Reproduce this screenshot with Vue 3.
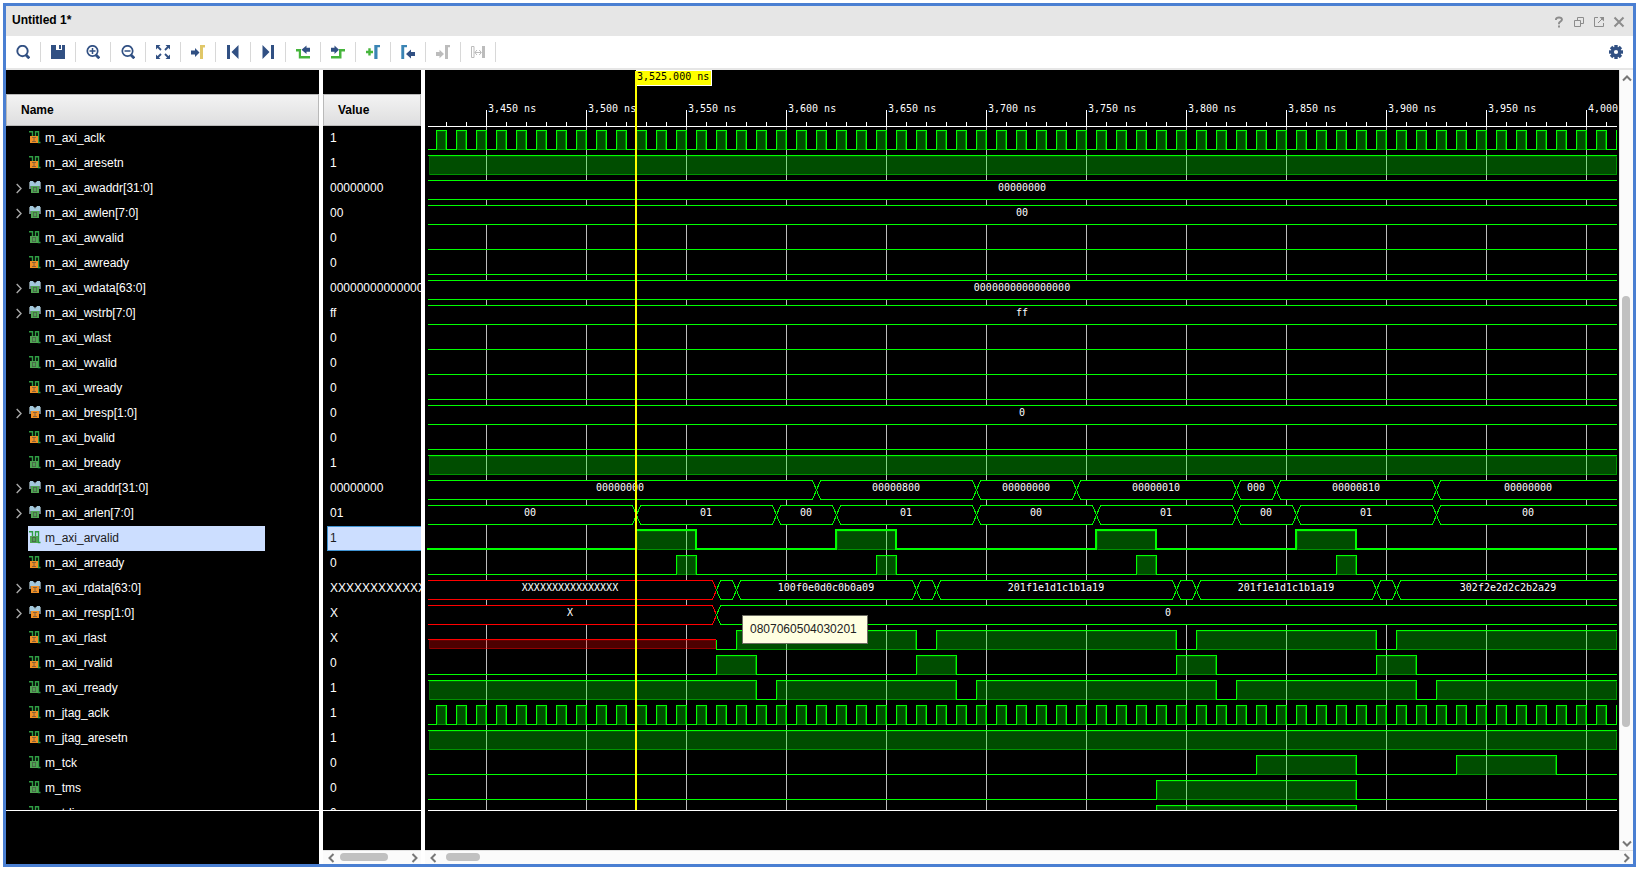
<script setup>
import { ref, computed, onMounted, onBeforeUnmount } from 'vue'

const tools = [
  { id: 'search', label: 'Find' },
  { id: 'save', label: 'Save waveform configuration' },
  { id: 'zoomin', label: 'Zoom in' },
  { id: 'zoomout', label: 'Zoom out' },
  { id: 'fit', label: 'Zoom fit' },
  { id: 'cursor', label: 'Go to cursor' },
  { id: 'first', label: 'Go to start' },
  { id: 'last', label: 'Go to end' },
  { id: 'prev', label: 'Previous transition' },
  { id: 'next', label: 'Next transition' },
  { id: 'add', label: 'Add marker' },
  { id: 'pmark', label: 'Previous marker' },
  { id: 'nmark', label: 'Next marker', disabled: true },
  { id: 'swap', label: 'Swap cursors', disabled: true }
]

const clock = { start: 0, edges: Array.from({ length: 122 }, (_, i) => 3415 + i * 5) }
const high = { start: 1, edges: [] }
const low = { start: 0, edges: [] }
const bus = (...values) => ({ values })

const signals = [
  { name: 'm_axi_aclk', dir: 'in', value: '1', wave: clock },
  { name: 'm_axi_aresetn', dir: 'in', value: '1', wave: high },
  { name: 'm_axi_awaddr[31:0]', dir: 'out', value: '00000000', wave: bus([0, '00000000']) },
  { name: 'm_axi_awlen[7:0]', dir: 'out', value: '00', wave: bus([0, '00']) },
  { name: 'm_axi_awvalid', dir: 'out', value: '0', wave: low },
  { name: 'm_axi_awready', dir: 'in', value: '0', wave: low },
  { name: 'm_axi_wdata[63:0]', dir: 'out', value: '0000000000000000', wave: bus([0, '0000000000000000']) },
  { name: 'm_axi_wstrb[7:0]', dir: 'out', value: 'ff', wave: bus([0, 'ff']) },
  { name: 'm_axi_wlast', dir: 'out', value: '0', wave: low },
  { name: 'm_axi_wvalid', dir: 'out', value: '0', wave: low },
  { name: 'm_axi_wready', dir: 'in', value: '0', wave: low },
  { name: 'm_axi_bresp[1:0]', dir: 'in', value: '0', wave: bus([0, '0']) },
  { name: 'm_axi_bvalid', dir: 'in', value: '0', wave: low },
  { name: 'm_axi_bready', dir: 'out', value: '1', wave: high },
  {
    name: 'm_axi_araddr[31:0]', dir: 'out', value: '00000000',
    wave: bus([0, '00000000'], [3615, '00000800'], [3695, '00000000'], [3745, '00000010'], [3825, '000'], [3845, '00000810'], [3925, '00000000'])
  },
  {
    name: 'm_axi_arlen[7:0]', dir: 'out', value: '01',
    wave: bus([0, '00'], [3525, '01'], [3595, '00'], [3625, '01'], [3695, '00'], [3755, '01'], [3825, '00'], [3855, '01'], [3925, '00'])
  },
  { name: 'm_axi_arvalid', dir: 'out', value: '1', selected: true, wave: { start: 0, edges: [3525, 3555, 3625, 3655, 3755, 3785, 3855, 3885] } },
  { name: 'm_axi_arready', dir: 'in', value: '0', wave: { start: 0, edges: [3545, 3555, 3645, 3655, 3775, 3785, 3875, 3885] } },
  {
    name: 'm_axi_rdata[63:0]', dir: 'in', value: 'XXXXXXXXXXXXXXXX',
    wave: bus([0, 'XXXXXXXXXXXXXXXX'], [3565, ''], [3575, '100f0e0d0c0b0a09'], [3665, ''], [3675, '201f1e1d1c1b1a19'], [3795, ''], [3805, '201f1e1d1c1b1a19'], [3895, ''], [3905, '302f2e2d2c2b2a29'])
  },
  { name: 'm_axi_rresp[1:0]', dir: 'in', value: 'X', wave: bus([0, 'X'], [3565, '0']) },
  { name: 'm_axi_rlast', dir: 'in', value: 'X', wave: { unknown: 3565, start: 0, edges: [3575, 3665, 3675, 3795, 3805, 3895, 3905] } },
  { name: 'm_axi_rvalid', dir: 'in', value: '0', wave: { start: 0, edges: [3565, 3585, 3665, 3685, 3795, 3815, 3895, 3915] } },
  { name: 'm_axi_rready', dir: 'out', value: '1', wave: { start: 1, edges: [3585, 3595, 3685, 3695, 3815, 3825, 3915, 3925] } },
  { name: 'm_jtag_aclk', dir: 'in', value: '1', wave: clock },
  { name: 'm_jtag_aresetn', dir: 'in', value: '1', wave: high },
  { name: 'm_tck', dir: 'out', value: '0', wave: { start: 0, edges: [3835, 3885, 3935, 3985] } },
  { name: 'm_tms', dir: 'out', value: '0', wave: { start: 0, edges: [3785, 3885] } },
  { name: 'm_tdi', dir: 'out', value: '0', wave: { start: 0, edges: [3785, 3885] } }
]

const plot = ref(null)
const width = ref(1194)
let observer
onMounted(() => {
  const measure = () => { width.value = Math.round(plot.value.clientWidth) }
  measure()
  observer = new ResizeObserver(measure)
  observer.observe(plot.value)
})
onBeforeUnmount(() => observer.disconnect())

const ROW = 25
const RULER = 56
const START = 3
const end = computed(() => width.value - 2)
const xOf = t => 61 + 2 * (t - 3450)
const cursorX = xOf(3525)

const ticks = computed(() => {
  const list = []
  for (let t = 3430; xOf(t) < end.value; t += 10) list.push({ x: xOf(t), major: t % 50 === 0, t })
  return list
})
const majors = computed(() => ticks.value.filter(k => k.major))
const stamp = t => `${String(t)[0]},${String(t).slice(1)} ns`

function drawLogic(s, y) {
  const o = s.selected ? 0 : 0.5
  const yh = y + 4 + o
  const yl = y + 23 + o
  const first = s.wave.unknown ? xOf(s.wave.unknown) : s.selected ? START - 1 : START
  let level = s.wave.start
  let from = first
  let d = s.wave.unknown ? `M${first + 0.5} ${y + 14}V${yl}` : `M${first} ${level ? yh : yl}`
  const fills = []
  const fill = (a, b) => { if (b - a > 3) fills.push({ x: a + 1.5, w: b - a - 2, y: y + 5.5, h: 18 }) }
  for (const t of s.wave.edges) {
    const x = xOf(t)
    if (x <= START || x >= end.value) continue
    if (level) fill(from, x)
    level = level ? 0 : 1
    from = x
    d += `H${x + o}V${level ? yh : yl}`
  }
  if (level) fill(from, end.value)
  d += `H${end.value}`
  return {
    lines: [{ d, red: false }],
    fills,
    unknown: s.wave.unknown ? { x: START + 1.5, y: y + 14.5, w: first - START - 2, h: 8, line: `M${START} ${y + 13.5}H${first}` } : null,
    blocks: [], texts: []
  }
}

function drawBus(s, y) {
  const t0 = y + 4.5
  const mid = y + 14
  const b0 = y + 23.5
  const lines = []
  const texts = []
  s.wave.values.forEach(([t, text], i, all) => {
    const isFirst = i === 0
    const isLast = i === all.length - 1
    const a = isFirst ? START : xOf(t) + 0.5
    const b = isLast ? end.value : xOf(all[i + 1][0]) + 0.5
    const al = isFirst ? a : a + 4
    const br = isLast ? b : b - 4
    let d = ''
    if (isFirst) d += `M${al} ${t0}`
    else d += `M${a} ${mid}L${al} ${t0}`
    d += `H${br}`
    if (!isLast) d += `L${b} ${mid}L${br} ${b0}`
    else d += `M${br} ${b0}`
    d += `H${al}`
    if (!isFirst) d += `L${a} ${mid}`
    lines.push({ d, red: text.startsWith('X') })
    const ca = isFirst ? -1 : xOf(t)
    const cb = isLast ? width.value : xOf(all[i + 1][0])
    if (text) texts.push({ x: Math.round((ca + cb) / 2), y: y + 15, text })
  })
  return { lines, texts, fills: [], unknown: null, blocks: [{ y: y + 4, h: 20 }] }
}

const drawn = computed(() => signals.map((s, i) => {
  const y = RULER + i * ROW
  return { id: s.name, selected: s.selected, ...(s.wave.values ? drawBus(s, y) : drawLogic(s, y)) }
}))

const isBus = s => !!s.wave.values
const vThumb = { top: '28%', height: '57.5%' }
const valueThumb = { left: '2%', width: '70%' }
const waveThumb = { left: '0.4%', width: '2.9%' }
</script>

<template>
  <main class="viewer">
    <header class="titlebar">
      <h1>Untitled 1*</h1>
      <div class="window-buttons">
        <button aria-label="Help"><svg width="12" height="12" viewBox="0 0 12 12"><path d="M3 4V3.2Q3.2 1.5 6 1.5T9 3.6Q9 4.8 7.4 5.6T6 7.6V8.2M6 9.4V11.4" stroke-width="1.9" /></svg></button>
        <button aria-label="Restore"><svg width="12" height="12" viewBox="0 0 12 12"><path d="M4.5 4.5V1.5H10.5V7.5H7.5M1.5 4.5H7.5V10.5H1.5Z" /></svg></button>
        <button aria-label="Float"><svg width="12" height="12" viewBox="0 0 12 12"><path d="M5 1.5H1.5V10.5H10.5V7M5 7L9 3" /><path d="M6.5 1H11V5.5Z" class="solid" /></svg></button>
        <button aria-label="Close"><svg width="12" height="12" viewBox="0 0 12 12"><path d="M1.5 1.5L10.5 10.5M10.5 1.5L1.5 10.5" stroke-width="2" /></svg></button>
      </div>
    </header>

    <nav class="toolbar" aria-label="Waveform tools">
      <button v-for="t in tools" :key="t.id" class="tool" :aria-label="t.label" :disabled="t.disabled">
        <svg width="14" height="14" viewBox="0 0 14 14">
          <g v-if="t.id === 'search'" class="ln"><circle cx="6.5" cy="6" r="5.2" stroke-width="1.9" /><path d="M10 10L13.3 13.3" stroke-width="2.8" /></g>
          <g v-else-if="t.id === 'save'" class="navy"><path d="M0 0H5V5H11V0H14V14H0Z" /><path d="M8 0H10V4H8Z" /></g>
          <g v-else-if="t.id === 'zoomin'" class="ln"><circle cx="6.5" cy="6" r="5.2" stroke-width="1.7" /><path d="M10 10L13.3 13.3" stroke-width="2.8" /><path d="M3.5 6H9.5M6.5 3V9" stroke-width="1.5" /></g>
          <g v-else-if="t.id === 'zoomout'" class="ln"><circle cx="6.5" cy="6" r="5.2" stroke-width="1.7" /><path d="M10 10L13.3 13.3" stroke-width="2.8" /><path d="M3.5 6H9.5" stroke-width="1.5" /></g>
          <g v-else-if="t.id === 'fit'"><path class="navy" d="M0 0H4.5L0 4.5ZM14 0V4.5L9.5 0ZM0 14V9.5L4.5 14ZM14 14H9.5L14 9.5Z" /><path class="ln" d="M1 1L5 5M13 1L9 5M1 13L5 9M13 13L9 9" stroke-width="1.8" /></g>
          <g v-else-if="t.id === 'cursor'"><path class="navy" d="M0 5.5H4V3L8.5 7.5L4 12V9.5H0Z" /><path class="gold" d="M9 14V0H14V2.5H12V14Z" /></g>
          <g v-else-if="t.id === 'first'" class="navy"><path d="M1 0H4V14H1ZM12.5 0V14L5.5 7Z" /></g>
          <g v-else-if="t.id === 'last'" class="navy"><path d="M10 0H13V14H10ZM1.5 0V14L8.5 7Z" /></g>
          <g v-else-if="t.id === 'prev'"><path class="green" d="M0 4H5V11H14V13.5H2.8V6.5H0Z" /><path class="navy" d="M14 2.7H10.5V0.5L5.5 4.8L10.5 9V6.8H14Z" /></g>
          <g v-else-if="t.id === 'next'"><path class="green" d="M14 4H8V11H0V13.5H10.5V6.5H14Z" /><path class="navy" d="M0 2.7H3.5V0.5L8 4.8L3.5 9V6.8H0Z" /></g>
          <g v-else-if="t.id === 'add'"><path class="green" d="M0 5.8H2.3V3.3H4.7V5.8H7V8.2H4.7V10.6H2.3V8.2H0Z" /><path class="teal" d="M8.3 14V0H14V2.2H11.5V14Z" /></g>
          <g v-else-if="t.id === 'pmark'"><path class="teal" d="M0.3 14V0H6V2.2H3.2V14Z" /><path class="navy" d="M14 7H10V4.6L5 9L10 13.4V11H14Z" /></g>
          <g v-else-if="t.id === 'nmark'" class="gray"><path d="M0 7H3.5V4.8L8 9L3.5 13.2V11H0Z" /><path d="M9 14V0H14V2.2H12V14Z" /></g>
          <g v-else><path class="gray" d="M11 1H14V13H11Z" /><path class="lg" d="M0.5 1.5H3V12.5H0.5ZM4 7.5H10M6 5L3.8 7.5L6 10M8.2 5L10.4 7.5L8.2 10" /></g>
        </svg>
      </button>
      <button class="settings" aria-label="Settings">
        <svg width="14" height="14" viewBox="-7 -7 14 14">
          <g class="navy"><rect v-for="a in 4" :key="a" x="-1.7" y="-7" width="3.4" height="14" :transform="`rotate(${a * 45})`" /><circle r="5.2" /></g>
          <circle r="2.1" fill="#fff" />
        </svg>
      </button>
    </nav>

    <div class="body">
      <section class="column names" aria-label="Name">
        <div class="pane">
          <div class="head"><h2>Name</h2></div>
          <div v-for="s in signals" :key="s.name" class="row">
            <button v-if="isBus(s)" class="expander" :aria-label="'Expand ' + s.name"><svg width="6" height="11" viewBox="0 0 6 11"><path d="M0.7 1L5 5.5L0.7 10" /></svg></button>
            <span v-else class="expander"></span>
            <span class="label" :class="{ selected: s.selected }">
              <svg width="12" height="13" viewBox="0 0 12 13" :class="s.dir">
                <template v-if="isBus(s)">
                  <path fill="#6f7f87" d="M0 1H12V8H0Z" />
                  <path fill="#a3c8dc" d="M1 0H4L6 3L8 0H11V5H1Z" />
                  <path fill="#000" d="M5 0H7L6 2Z" />
                  <rect class="chip" x="2" y="5" width="8" height="7" />
                  <path class="mark" d="M4 6.5H8M4 10.5H8" />
                  <path v-if="s.dir === 'in'" class="mark" d="M6 6.5V10.5" />
                  <path v-else class="mark" d="M4.5 6.5V10.5M7.5 6.5V10.5" />
                </template>
                <template v-else>
                  <path class="pulse" d="M0 0.8H3.5V6M6.5 9V0.8H9.5V11.5H11.5" />
                  <rect class="chip" x="1" y="5" width="8" height="7" />
                  <path class="mark" d="M3 6.5H7M3 10.5H7" />
                  <path v-if="s.dir === 'in'" class="mark" d="M5 6.5V10.5" />
                  <path v-else class="mark" d="M3.5 6.5V10.5M6.5 6.5V10.5" />
                </template>
              </svg>
              {{ s.name }}
            </span>
          </div>
        </div>
        <div class="foot tall"></div>
      </section>

      <section class="column values" aria-label="Value">
        <div class="pane">
          <div class="head"><h2>Value</h2></div>
          <div v-for="s in signals" :key="s.name" class="row value" :class="{ selected: s.selected }">{{ s.value }}</div>
        </div>
        <div class="foot"></div>
        <div class="hbar">
          <button aria-label="Scroll values left"><svg width="7" height="10" viewBox="0 0 7 10"><path d="M5.5 1L1.5 5L5.5 9" /></svg></button>
          <div class="track"><div class="thumb" :style="valueThumb"></div></div>
          <button class="forward" aria-label="Scroll values right"><svg width="7" height="10" viewBox="0 0 7 10"><path d="M1.5 1L5.5 5L1.5 9" /></svg></button>
        </div>
      </section>

      <section class="waves" aria-label="Waveforms">
        <div class="wave-main">
          <div class="column wave-column">
            <div ref="plot" class="pane plot">
              <svg class="canvas" :width="width" height="756">
                <g shape-rendering="crispEdges">
                  <path v-for="k in majors" :key="k.t" class="grid" :d="`M${k.x + 0.5} ${RULER}V756`" />
                  <path v-for="k in ticks" :key="'t' + k.t" class="tick" :d="`M${k.x + 0.5} ${k.major ? 40 : 52}V${RULER}`" />
                  <path class="tick" :d="`M${START} ${RULER + 0.5}H${end}`" />
                  <g v-for="g in drawn" :key="g.id">
                    <rect v-for="b in g.blocks" :key="b.y" :x="START" :y="b.y" :width="end - START" :height="b.h" />
                    <rect v-for="f in g.fills" :key="f.x" class="fill" :x="f.x" :y="f.y" :width="f.w" :height="f.h" />
                    <template v-if="g.unknown">
                      <rect class="fill red" :x="g.unknown.x" :y="g.unknown.y" :width="g.unknown.w" :height="g.unknown.h" />
                      <path class="line red" :d="g.unknown.line" />
                    </template>
                    <path v-for="l in g.lines" :key="l.d" class="line" :class="{ red: l.red, thick: g.selected }" :d="l.d" />
                  </g>
                </g>
                <text v-for="k in majors" :key="'l' + k.t" :x="k.x + 2" y="42">{{ stamp(k.t) }}</text>
                <template v-for="g in drawn" :key="'v' + g.id">
                  <text v-for="t in g.texts" :key="t.x" class="mid" :x="t.x" :y="t.y">{{ t.text }}</text>
                </template>
                <g shape-rendering="crispEdges">
                  <rect :x="cursorX" y="0" width="76" height="16" fill="#fff" />
                  <rect :x="cursorX" y="1" width="75" height="14" fill="#ff0" />
                  <rect :x="cursorX - 1" y="1" width="2" height="755" fill="#ff0" />
                </g>
                <text class="stamp" :x="cursorX + 1" y="10">3,525.000 ns</text>
              </svg>
              <div class="tip" role="tooltip">0807060504030201</div>
            </div>
            <div class="foot inset"></div>
          </div>
          <div class="vbar">
            <button aria-label="Scroll up"><svg width="10" height="7" viewBox="0 0 10 7"><path d="M1 5.5L5 1.5L9 5.5" /></svg></button>
            <div class="track"><div class="thumb" :style="vThumb"></div></div>
            <button class="forward" aria-label="Scroll down"><svg width="10" height="7" viewBox="0 0 10 7"><path d="M1 1.5L5 5.5L9 1.5" /></svg></button>
          </div>
        </div>
        <div class="hbar">
          <button aria-label="Scroll waveform left"><svg width="7" height="10" viewBox="0 0 7 10"><path d="M5.5 1L1.5 5L5.5 9" /></svg></button>
          <div class="track"><div class="thumb" :style="waveThumb"></div></div>
          <button class="forward" aria-label="Scroll waveform right"><svg width="7" height="10" viewBox="0 0 7 10"><path d="M1.5 1L5.5 5L1.5 9" /></svg></button>
        </div>
      </section>
    </div>
  </main>
</template>

<style>
body {
  margin: 0;
  background: #fff;
}
</style>

<style scoped>
.viewer {
  box-sizing: border-box;
  height: calc(100vh - 6px);
  margin: 3px;
  border: 3px solid #4a7fd2;
  display: flex;
  flex-direction: column;
  background: #fff;
  font: 12px "Liberation Sans", Arial, sans-serif;
  color: #000;
}
button {
  padding: 0;
  border: 0;
  background: none;
  display: flex;
  align-items: center;
  justify-content: center;
}
h1, h2 {
  margin: 0;
  font-size: 12px;
  font-weight: bold;
}
.titlebar {
  height: 30px;
  flex: none;
  display: flex;
  align-items: center;
  justify-content: space-between;
  padding: 0 4px 2px 6px;
  box-sizing: border-box;
  background: #e6e6e6;
}
.window-buttons {
  display: flex;
  padding-top: 4px;
}
.window-buttons button {
  width: 20px;
}
.window-buttons path {
  fill: none;
  stroke: #8c8c8c;
}
.window-buttons .solid {
  fill: #8c8c8c;
  stroke: none;
}
.toolbar {
  height: 32px;
  flex: none;
  display: flex;
  align-items: center;
  border-bottom: 2px solid #e6e6e6;
}
.tool {
  width: 35px;
  height: 20px;
  border-right: 1px solid #d8d8d8;
}
.settings {
  width: 34px;
  height: 20px;
  margin-left: auto;
}
.navy { fill: #315083; }
.gold { fill: #e0c768; }
.green { fill: #46b53c; }
.teal { fill: #3a84b4; }
.gray { fill: #bcbcbc; }
.ln { fill: none; stroke: #315083; }
.lg { fill: none; stroke: #bcbcbc; }

.body {
  flex: 1;
  min-height: 0;
  display: flex;
  gap: 4px;
}
.column {
  display: flex;
  flex-direction: column;
  background: #000;
  color: #fff;
  min-width: 0;
}
.names { width: 313px; flex: none; }
.values { width: 98px; flex: none; }
.pane {
  flex: 1;
  min-height: 0;
  overflow: hidden;
}
.head {
  box-sizing: border-box;
  height: 32px;
  margin-top: 24px;
  padding-left: 14px;
  display: flex;
  align-items: center;
  border: 1px solid #b9b9b9;
  background: linear-gradient(#f3f3f3, #dededf);
  color: #000;
}
.foot {
  box-sizing: border-box;
  flex: none;
  height: 40px;
  border-top: 1px solid #fff;
}
.foot.tall { height: 54px; }
.foot.inset { margin: 0 2px 0 3px; }
.row {
  height: 25px;
  display: flex;
  align-items: center;
  white-space: nowrap;
}
.expander {
  width: 22px;
  flex: none;
  padding-left: 4px;
  box-sizing: border-box;
}
.expander path {
  fill: none;
  stroke: #a8a8a8;
  stroke-width: 1.4;
}
.label {
  box-sizing: border-box;
  width: 237px;
  height: 25px;
  padding: 0 0 2px 1px;
  display: flex;
  align-items: center;
  gap: 4px;
}
.selected {
  background: #ccdeff;
  color: #1b1b1b;
}
.pulse { fill: none; stroke: #2f9e44; stroke-width: 1.4; }
.mark { fill: none; stroke: #4a4a4a; stroke-width: 1; opacity: 0.6; }
.in .chip { fill: #f08f24; }
.out .chip { fill: #4fa552; }
.value {
  box-sizing: border-box;
  margin-left: 4px;
  padding: 0 0 2px 3px;
}
.value.selected {
  border: 1px solid #4093d2;
  border-right: 0;
  padding-left: 2px;
}
.waves {
  flex: 1;
  min-width: 0;
  display: flex;
  flex-direction: column;
}
.wave-main {
  flex: 1;
  min-height: 0;
  display: flex;
}
.wave-column { flex: 1; }
.plot { position: relative; }
.canvas { display: block; }
.grid { stroke: #bcbcbc; }
.tick { stroke: #fff; }
.line { fill: none; stroke: #0f0; }
.line.red { stroke: #f00; }
.line.thick { stroke-width: 2; }
.fill { fill: rgba(0, 255, 0, 0.3); stroke: rgba(0, 255, 0, 0.4); }
.fill.red { fill: rgba(255, 0, 0, 0.3); stroke: rgba(255, 0, 0, 0.4); }
text {
  font: 10px "DejaVu Sans Mono", monospace;
  fill: #fff;
}
.mid { text-anchor: middle; }
.stamp { fill: #000; }
.tip {
  position: absolute;
  left: 317px;
  top: 545px;
  padding: 0 10px 0 7px;
  border: 1px solid #6d6d63;
  background: #ffffe1;
  color: #222;
  line-height: 27px;
}
.hbar, .vbar {
  box-sizing: border-box;
  flex: none;
  display: flex;
  background: #fbfbfb;
}
.hbar {
  height: 14px;
  border-top: 1px solid #e2e2e2;
}
.vbar {
  width: 14px;
  flex-direction: column;
  border-left: 1px solid #e2e2e2;
}
.hbar button { width: 16px; }
.vbar button { height: 16px; }
.hbar .forward { width: 14px; }
.vbar .forward { height: 14px; }
.hbar path, .vbar path {
  fill: none;
  stroke: #787878;
  stroke-width: 2;
}
.track {
  flex: 1;
  position: relative;
}
.thumb {
  position: absolute;
  background: #c1c1c1;
  border-radius: 4px;
}
.hbar .thumb { top: 2px; bottom: 3px; }
.vbar .thumb { left: 2px; right: 3px; }
</style>
